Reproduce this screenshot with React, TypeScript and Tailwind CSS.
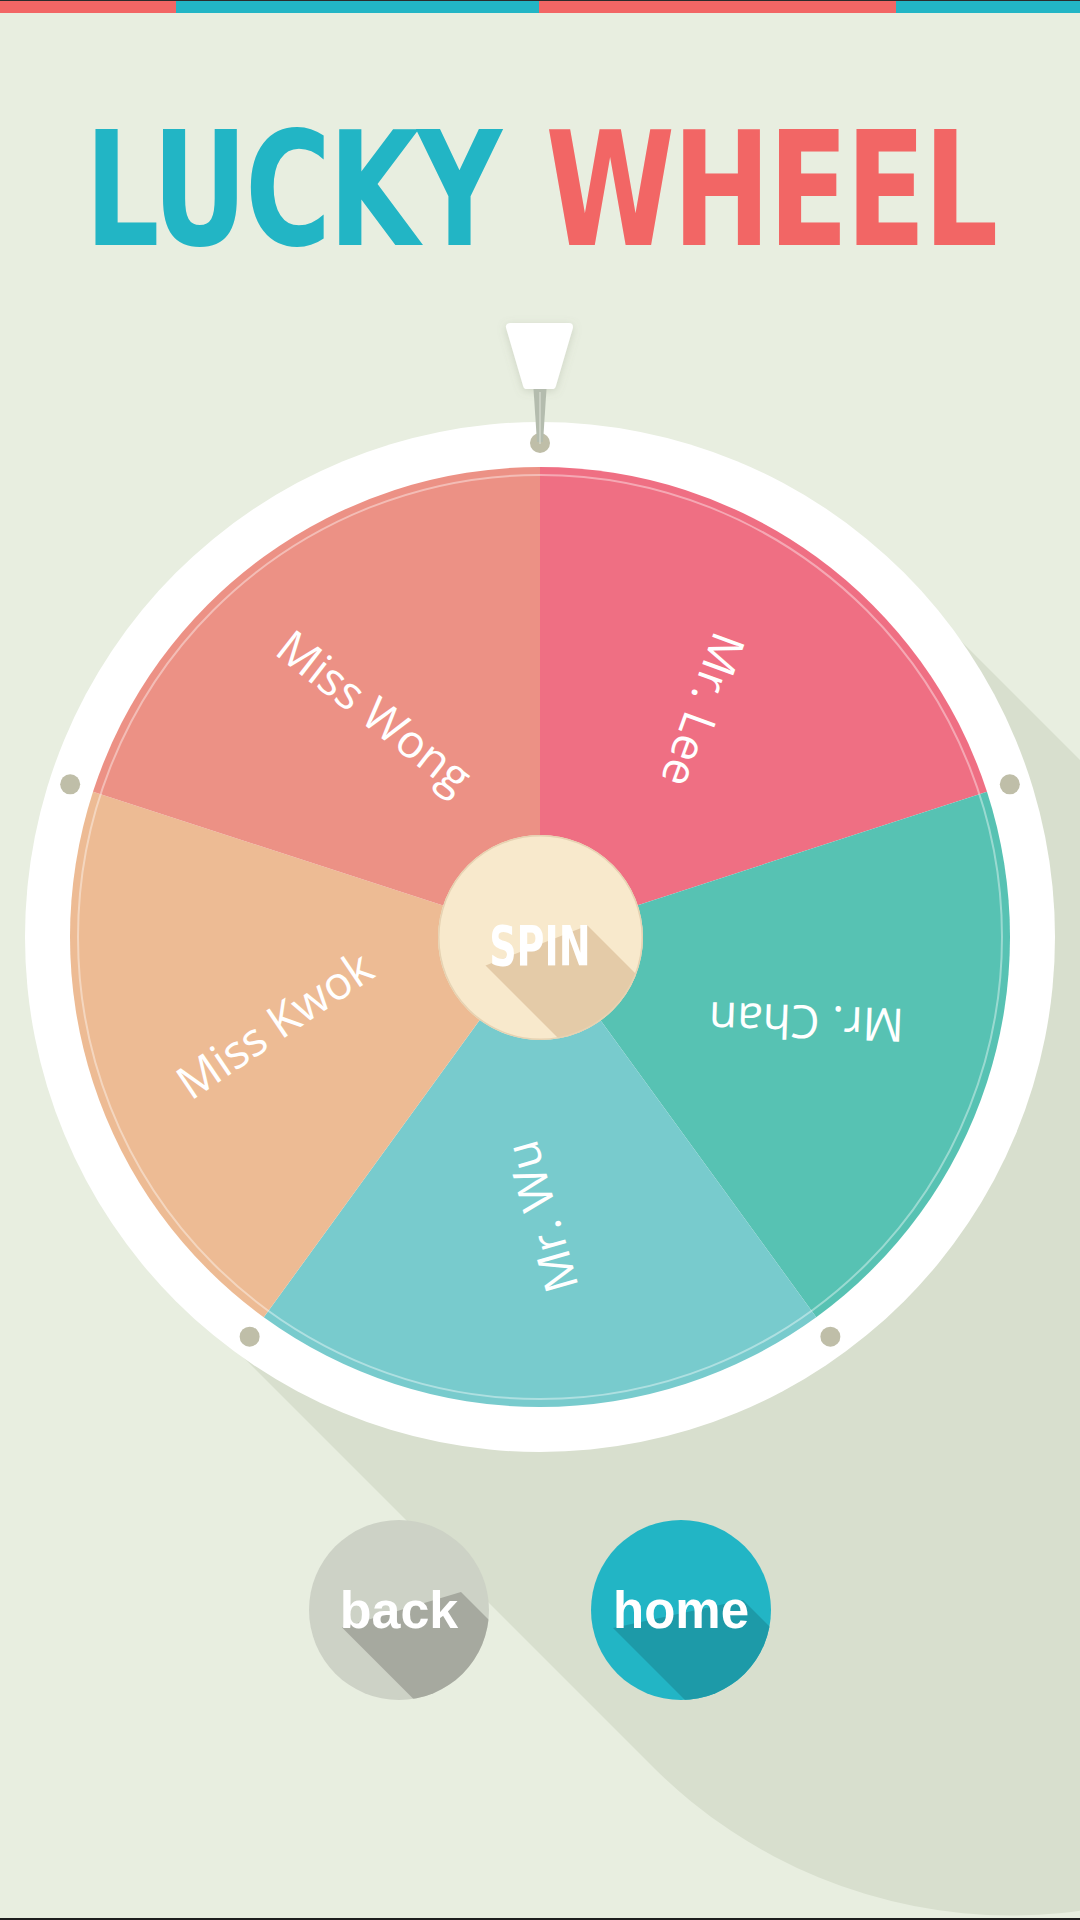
// Lucky wheel screen
import React from "react";

// Constants
const RED = "#f26665";
const TEAL = "#22b5c5";
const SIZE = 1030;
const C = SIZE / 2;
const SEG_R = 470;

const SEGMENTS = [
  { name: "Mr. Lee", color: "#ef6f83" },
  { name: "Mr. Chan", color: "#57c2b3" },
  { name: "Mr. Wu", color: "#78cbcd" },
  { name: "Miss Kwok", color: "#edbb94" },
  { name: "Miss Wong", color: "#ec9185" },
];

// Point on the wheel, angle measured clockwise from the top
const polar = (r: number, deg: number) => {
  const a = (deg * Math.PI) / 180;
  return [C + r * Math.sin(a), C - r * Math.cos(a)];
};

const slicePath = (i: number) => {
  const [x0, y0] = polar(SEG_R, i * 72);
  const [x1, y1] = polar(SEG_R, (i + 1) * 72);
  return `M ${C} ${C} L ${x0} ${y0} A ${SEG_R} ${SEG_R} 0 0 1 ${x1} ${y1} Z`;
};

function Wheel() {
  return (
    <svg width={SIZE} height={SIZE} viewBox={`0 0 ${SIZE} ${SIZE}`}>
      <circle cx={C} cy={C} r={515} fill="#ffffff" />
      {SEGMENTS.map((s, i) => (
        <path key={s.name} d={slicePath(i)} fill={s.color} />
      ))}
      <circle cx={C} cy={C} r={462} fill="none" stroke="#ffffff" strokeOpacity={0.4} strokeWidth={2} />
      {/* Ring dots */}
      {SEGMENTS.map((s, i) => {
        const [x, y] = polar(494, i * 72);
        return <circle key={s.name} cx={x} cy={y} r={10} fill="#bfbea8" />;
      })}
      {/* Names */}
      {SEGMENTS.map((s, i) => {
        const a = 36 + i * 72;
        const [x, y] = polar(280, a);
        return (
          <text
            key={s.name}
            transform={`translate(${x} ${y}) rotate(${a + 74})`}
            textAnchor="middle"
            dominantBaseline="central"
            fill="#ffffff"
            fontSize={46}
            fontFamily="'Open Sans', 'Noto Sans', sans-serif"
          >
            {s.name}
          </text>
        );
      })}
    </svg>
  );
}

function Pointer() {
  return (
    <svg width={100} height={150} viewBox="0 0 100 150" className="absolute left-[465px] top-[-112px]">
      <defs>
        <filter id="pointer-shadow" x="-30%" y="-30%" width="160%" height="160%">
          <feDropShadow dx="0" dy="2" stdDeviation="4" floodColor="#7a8470" floodOpacity="0.25" />
        </filter>
      </defs>
      <path
        d="M 20 17 L 79 17 L 62 75 L 37 75 Z"
        fill="#ffffff"
        stroke="#ffffff"
        strokeWidth={8}
        strokeLinejoin="round"
        filter="url(#pointer-shadow)"
      />
      <path d="M 43.5 79 L 56.5 79 L 53 132 L 47 132 Z" fill="#b4bcae" />
      <path d="M 50 82 L 50 134" stroke="#d2d7cb" strokeWidth={1.5} />
    </svg>
  );
}

type RoundButtonProps = {
  id: string;
  label: string;
  fill: string;
  shade: string;
  shadow: string;
  className: string;
  textClass: string;
  box: number;
  edge?: string;
};

// Flat round button with a long text shadow clipped to the circle
function RoundButton({ id, label, fill, shade, shadow, className, textClass, box, edge }: RoundButtonProps) {
  const r = box / 2;
  return (
    <button className={`relative flex shrink-0 items-center justify-center rounded-full ${className}`}>
      <svg width={box} height={box} viewBox={`0 0 ${box} ${box}`} className="absolute inset-0">
        <defs>
          <clipPath id={id}>
            <circle cx={r} cy={r} r={r} />
          </clipPath>
        </defs>
        <circle cx={r} cy={r} r={r} fill={fill} />
        <polygon points={shadow} fill={shade} clipPath={`url(#${id})`} />
        {edge && <circle cx={r} cy={r} r={r - 0.75} fill="none" stroke={edge} strokeWidth={1.5} />}
      </svg>
      <span className={`relative leading-none text-white ${textClass}`}>{label}</span>
    </button>
  );
}

export default function App() {
  return (
    <div className="relative h-[1920px] w-[1080px] overflow-hidden border-b-2 border-[#1e1e1e] bg-[#e8eee0]">
      {/* Long shadow of the wheel */}
      <svg className="absolute inset-0" width={1080} height={1920} viewBox="0 0 1080 1920">
        <path
          d="M 898.5 578.5 L 1371.5 1051.5 A 507 507 0 0 1 654.5 1768.5 L 181.5 1295.5 A 507 507 0 0 1 898.5 578.5 Z"
          fill="#d8dfce"
        />
      </svg>

      <div className="relative">
        {/* Top colour bar */}
        <div className="flex h-[13px] border-t border-[#2b2b2b]">
          <div className="w-[176px] bg-[#f26665]" />
          <div className="w-[363px] bg-[#22b5c5]" />
          <div className="w-[357px] bg-[#f26665]" />
          <div className="flex-1 bg-[#22b5c5]" />
        </div>

        {/* Title */}
        <div className="mt-[98px] flex justify-center">
          <h1 className="flex scale-x-[0.825] gap-[56px] font-['DejaVu_Sans_Condensed','DejaVu_Sans',sans-serif] text-[158px] font-bold leading-none tracking-[-3px]">
            <span style={{ color: TEAL }}>LUCKY</span>
            <span style={{ color: RED }}>WHEEL</span>
          </h1>
        </div>

        {/* Wheel */}
        <div className="relative mx-auto mt-[153px] h-[1030px] w-[1030px]">
          <Wheel />
          <Pointer />
          <div className="absolute inset-0 m-auto h-[205px] w-[205px]">
            <RoundButton
              id="spin-clip"
              label="SPIN"
              fill="#f8e9cc"
              shade="#e4cba8"
              edge="#e6d2b2"
              shadow="149.5,90.5 349.5,290.5 247.5,330.5 47.5,130.5"
              box={205}
              className="h-[205px] w-[205px]"
              textClass="translate-y-[9px] scale-x-[0.77] font-['DejaVu_Sans_Condensed','DejaVu_Sans',sans-serif] text-[55px] font-bold"
            />
          </div>
        </div>

        {/* Navigation */}
        <div className="mt-[68px] flex justify-center gap-[102px]">
          <RoundButton
            id="back-clip"
            label="back"
            fill="#cdd2c6"
            shade="#a6a99f"
            shadow="152,72 352,272 233,307.5 33,107.5"
            box={180}
            className="h-[180px] w-[180px]"
            textClass="font-['Liberation_Sans',Arial,sans-serif] text-[52px] font-bold"
          />
          <RoundButton
            id="home-clip"
            label="home"
            fill="#22b5c5"
            shade="#1d9aa8"
            shadow="152,80 352,280 222,308 22,108"
            box={180}
            className="h-[180px] w-[180px]"
            textClass="font-['Liberation_Sans',Arial,sans-serif] text-[51px] font-bold"
          />
        </div>
      </div>
    </div>
  );
}
